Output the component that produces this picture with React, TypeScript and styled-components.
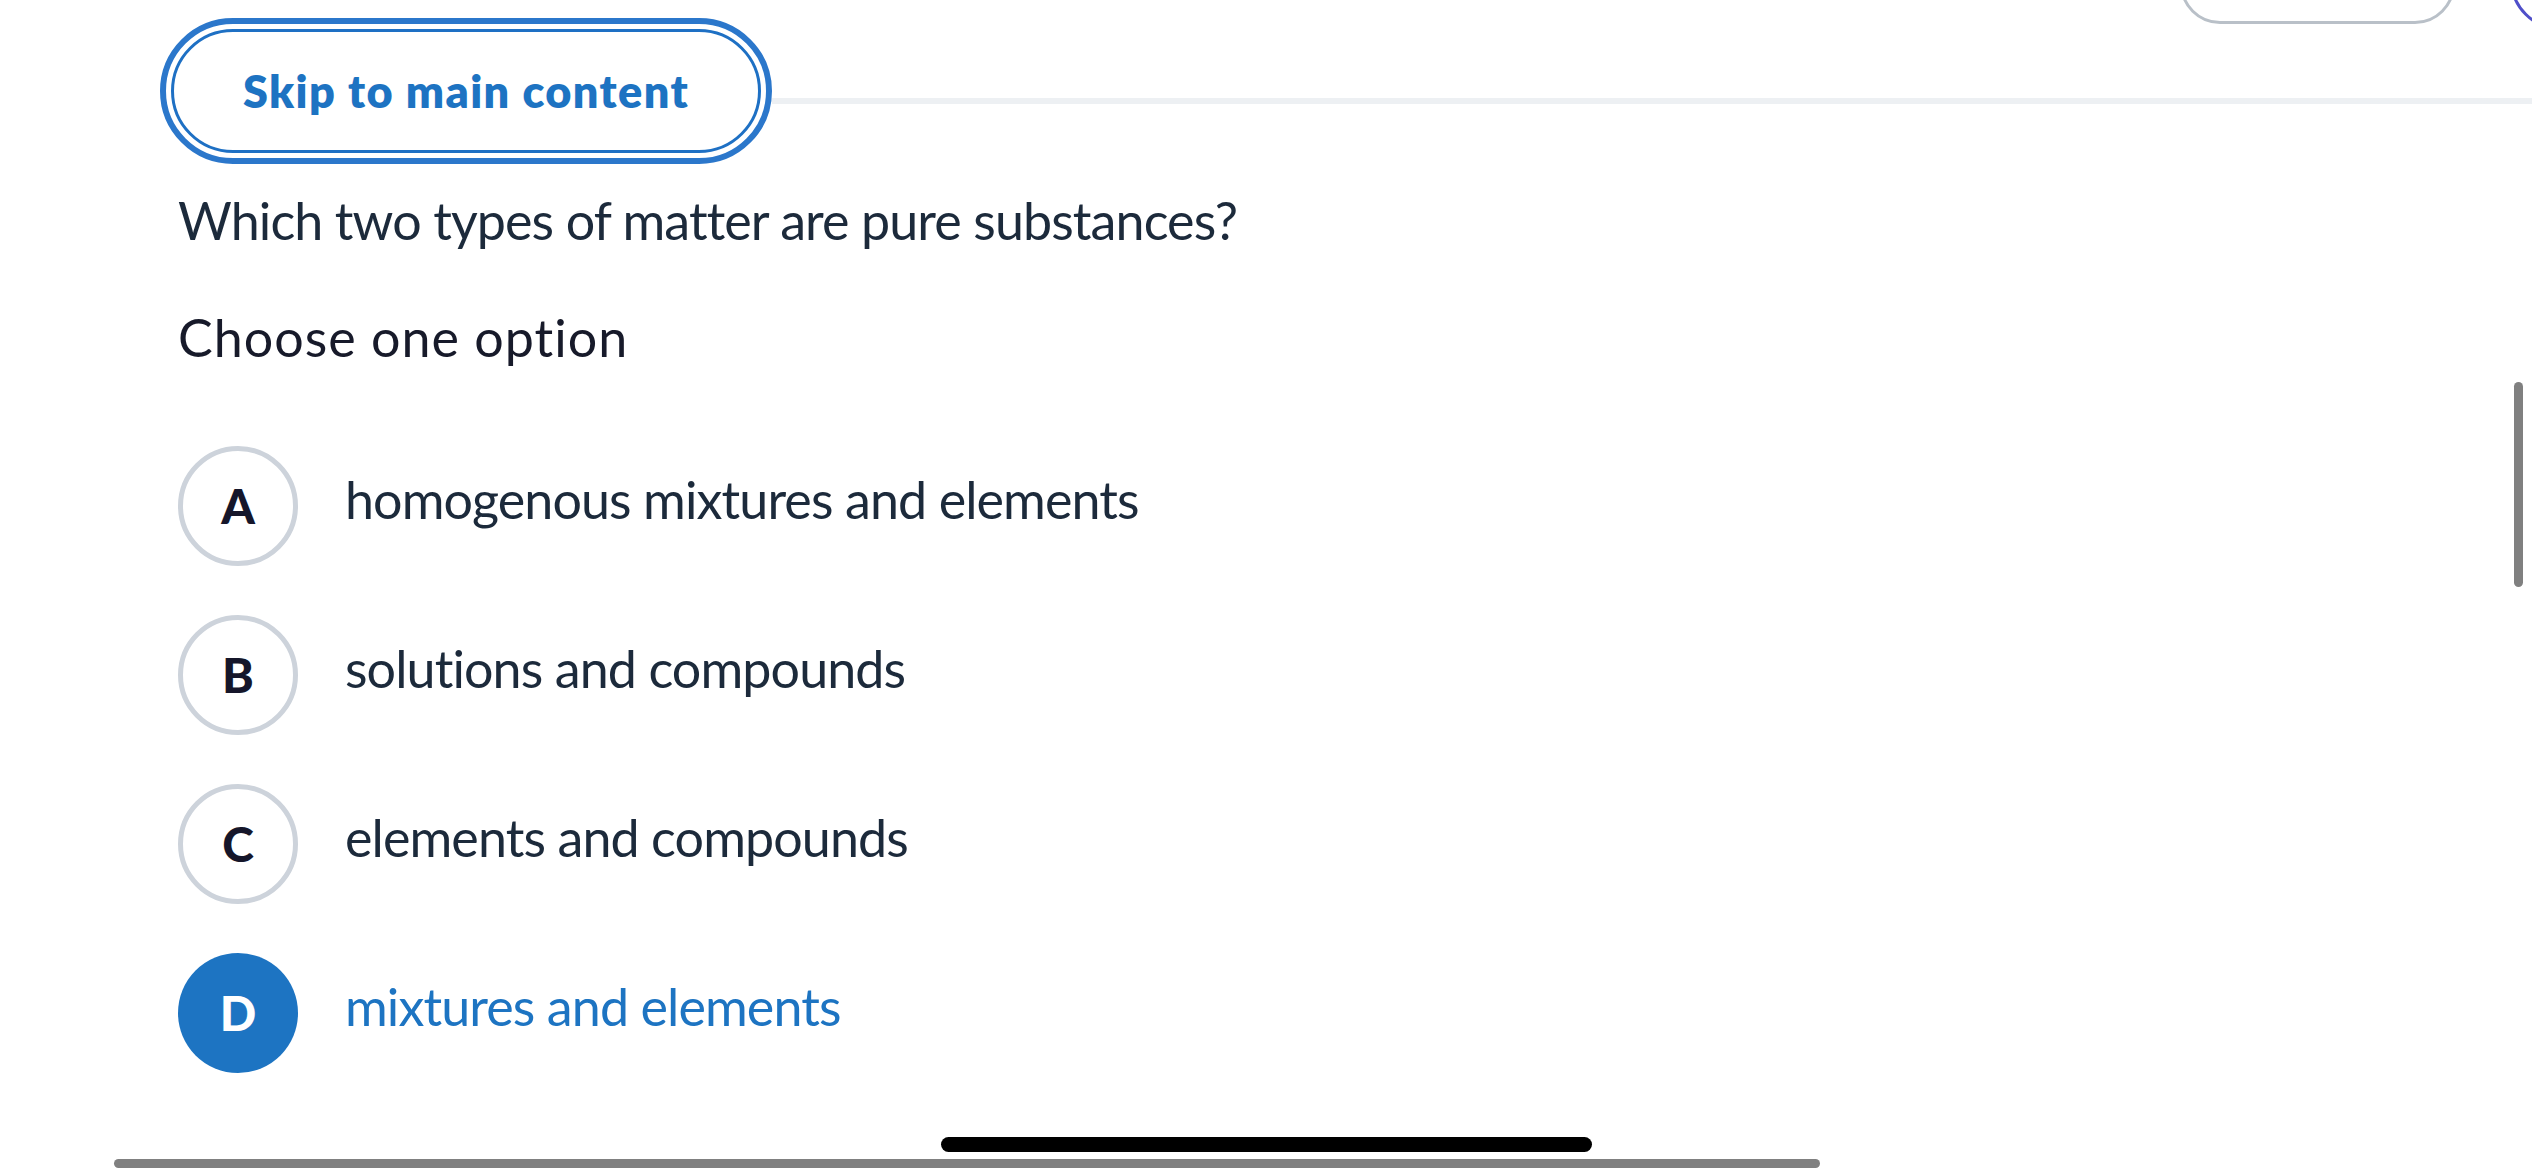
import styled, { createGlobalStyle } from "styled-components";

const GlobalStyle = createGlobalStyle`
    html, body {
        margin: 0;
        padding: 0;
        background: #ffffff;
        overflow: hidden;
    }
    body {
        font-family: Lato, "Open Sans", sans-serif;
        color: #1d2939;
    }
`;

const Page = styled.div`
    position: relative;
    width: 2532px;
    height: 1170px;
    overflow: hidden;
    background: #ffffff;
`;

const Header = styled.header`
    display: flex;
    justify-content: flex-end;
    align-items: flex-end;
    gap: 55px;
    height: 104px;
    margin-left: 772px;
    padding-bottom: 74px;
    box-sizing: border-box;
    border-bottom: 6px solid #edf0f3;
`;

const UpgradePill = styled.div`
    width: 275px;
    height: 80px;
    box-sizing: border-box;
    border: 3px solid #b9c0c8;
    border-radius: 40px;
    background: #ffffff;
`;

const Avatar = styled.div`
    width: 100px;
    height: 100px;
    box-sizing: border-box;
    margin-right: -78px;
    margin-bottom: -6px;
    border: 3px solid #4f4fc9;
    border-radius: 50%;
`;

const SkipLink = styled.a`
    position: absolute;
    left: 171px;
    top: 29px;
    display: flex;
    align-items: center;
    justify-content: center;
    width: 590px;
    height: 124px;
    box-sizing: border-box;
    border: 3px solid #1e70c4;
    border-radius: 62px;
    outline: 6px solid #2b77cb;
    outline-offset: 5px;
    background: #ffffff;
    color: #1d73c2;
    font-size: 45px;
    font-weight: 800;
    letter-spacing: 1.4px;
    text-decoration: none;
`;

const Main = styled.main`
    padding: 80px 0 0 178px;
`;

const Prompt = styled.p`
    margin: 0;
    font-size: 52px;
    line-height: 72px;
    letter-spacing: -0.9px;
    color: #1c2a3b;
`;

const Instruction = styled(Prompt)`
    margin-top: 45px;
    letter-spacing: 1px;
    color: #171a2a;
`;

const OptionList = styled.ul`
    display: flex;
    flex-direction: column;
    gap: 49px;
    margin: 73px 0 0;
    padding: 0;
    list-style: none;
`;

const Option = styled.li`
    display: flex;
    align-items: center;
    gap: 47px;
`;

const Badge = styled.span<{ selected?: boolean }>`
    display: flex;
    align-items: center;
    justify-content: center;
    width: 120px;
    height: 120px;
    flex-shrink: 0;
    box-sizing: border-box;
    border-radius: 50%;
    border: ${(p) => (p.selected ? "none" : "5px solid #cdd3db")};
    background: ${(p) => (p.selected ? "#1d74c2" : "#ffffff")};
    color: ${(p) => (p.selected ? "#ffffff" : "#15162a")};
    font-size: 48px;
    font-weight: 900;
    line-height: 1;
`;

const OptionText = styled.span<{ selected?: boolean }>`
    padding-bottom: 14px;
    font-size: 52px;
    line-height: 72px;
    letter-spacing: -0.9px;
    color: ${(p) => (p.selected ? "#1d74c2" : "#1c2a3b")};
`;

const VScroll = styled.div`
    position: absolute;
    left: 2514px;
    top: 382px;
    width: 9px;
    height: 205px;
    border-radius: 5px;
    background: #808080;
`;

const HScroll = styled.div`
    position: absolute;
    left: 114px;
    top: 1159px;
    width: 1706px;
    height: 9px;
    border-radius: 5px;
    background: #808080;
`;

const HomeIndicator = styled.div`
    position: absolute;
    left: 941px;
    top: 1137px;
    width: 651px;
    height: 15px;
    border-radius: 8px;
    background: #000000;
`;

const options = [
    { letter: "A", text: "homogenous mixtures and elements" },
    { letter: "B", text: "solutions and compounds" },
    { letter: "C", text: "elements and compounds" },
    { letter: "D", text: "mixtures and elements", selected: true },
];

function App() {
    return (
        <Page>
            <GlobalStyle />
            <Header>
                <UpgradePill />
                <Avatar />
            </Header>
            <SkipLink href="#main">Skip to main content</SkipLink>
            <Main id="main">
                <Prompt>Which two types of matter are pure substances?</Prompt>
                <Instruction>Choose one option</Instruction>
                <OptionList>
                    {options.map((option) => (
                        <Option key={option.letter}>
                            <Badge selected={option.selected}>{option.letter}</Badge>
                            <OptionText selected={option.selected}>{option.text}</OptionText>
                        </Option>
                    ))}
                </OptionList>
            </Main>
            <VScroll />
            <HScroll />
            <HomeIndicator />
        </Page>
    );
}

export default App;
